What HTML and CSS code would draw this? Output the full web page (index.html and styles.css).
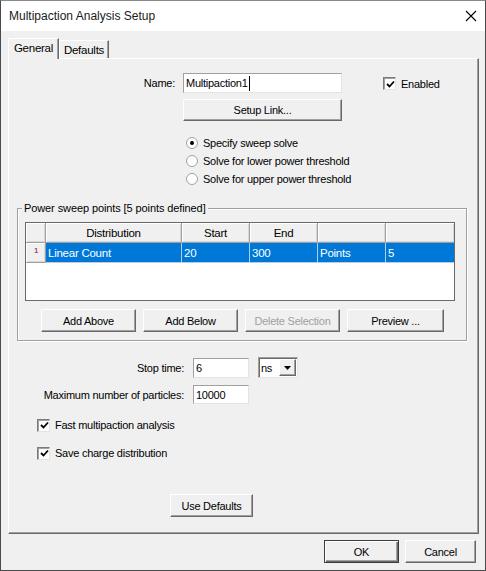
FILE: index.html
```html
<!DOCTYPE html>
<html>
<head>
<meta charset="utf-8">
<title>Multipaction Analysis Setup</title>
<link rel="stylesheet" href="styles.css">
</head>
<body>
<div class="window">
  <div class="titlebar">
    <span class="title">Multipaction Analysis Setup</span>
    <svg class="close" width="12" height="12" viewBox="0 0 12 12"><path d="M1 1L11 11M11 1L1 11" stroke="#000" stroke-width="1.1" fill="none"/></svg>
  </div>
  <div class="client">
    <div class="tabs">
      <div class="tab active">General</div>
      <div class="tab">Defaults</div>
    </div>
    <div class="panel">
      <div class="name-row">
        <span class="name-lbl">Name:</span>
        <div class="textbox name-box">Multipaction1<span class="caret"></span></div>
        <div class="check enabled">
          <span class="cbox"><svg width="9" height="9" viewBox="0 0 9 9"><path d="M1 4L3.5 6.5L8 1.5" stroke="#000" stroke-width="1.8" fill="none"/></svg></span>
          <span>Enabled</span>
        </div>
      </div>
      <div class="btn setup">Setup Link...</div>
      <div class="radios">
        <div class="radio"><svg class="rc" width="12" height="12" viewBox="0 0 12 12"><circle cx="6" cy="6" r="5.5" fill="#fff" stroke="#a0a0a0"/><circle cx="6" cy="6" r="2" fill="#000"/></svg><span>Specify sweep solve</span></div>
        <div class="radio"><svg class="rc" width="12" height="12" viewBox="0 0 12 12"><circle cx="6" cy="6" r="5.5" fill="#fff" stroke="#a0a0a0"/></svg><span>Solve for lower power threshold</span></div>
        <div class="radio"><svg class="rc" width="12" height="12" viewBox="0 0 12 12"><circle cx="6" cy="6" r="5.5" fill="#fff" stroke="#a0a0a0"/></svg><span>Solve for upper power threshold</span></div>
      </div>
      <div class="group">
        <div class="legend">Power sweep points [5 points defined]</div>
        <div class="grid">
          <div class="hcell corner"></div>
          <div class="hcell">Distribution</div>
          <div class="hcell">Start</div>
          <div class="hcell">End</div>
          <div class="hcell"></div>
          <div class="hcell last"></div>
          <div class="hcell rowhead"><span class="rownum">1</span></div>
          <div class="dcell">Linear Count</div>
          <div class="dcell">20</div>
          <div class="dcell">300</div>
          <div class="dcell">Points</div>
          <div class="dcell last">5</div>
          <div class="empty"></div>
        </div>
        <div class="btnrow">
          <div class="btn gbtn">Add Above</div>
          <div class="btn gbtn">Add Below</div>
          <div class="btn gbtn disabled">Delete Selection</div>
          <div class="btn gbtn preview">Preview ...</div>
        </div>
      </div>
      <div class="field-row stop">
        <span class="field-lbl">Stop time:</span>
        <div class="textbox short">6</div>
        <div class="combo">
          <span class="combo-val">ns</span>
          <span class="combo-btn"><svg width="7" height="4" viewBox="0 0 7 4"><path d="M0 0H7L3.5 4Z" fill="#000"/></svg></span>
        </div>
      </div>
      <div class="field-row maxp">
        <span class="field-lbl">Maximum number of particles:</span>
        <div class="textbox short thin">10000</div>
      </div>
      <div class="check opt first">
        <span class="cbox"><svg width="9" height="9" viewBox="0 0 9 9"><path d="M1 4L3.5 6.5L8 1.5" stroke="#000" stroke-width="1.8" fill="none"/></svg></span>
        <span>Fast multipaction analysis</span>
      </div>
      <div class="check opt second">
        <span class="cbox"><svg width="9" height="9" viewBox="0 0 9 9"><path d="M1 4L3.5 6.5L8 1.5" stroke="#000" stroke-width="1.8" fill="none"/></svg></span>
        <span>Save charge distribution</span>
      </div>
      <div class="btn usedef">Use Defaults</div>
    </div>
    <div class="footer">
      <div class="btn ok">OK</div>
      <div class="btn cancel">Cancel</div>
    </div>
  </div>
</div>
</body>
</html>
```
FILE: styles.css
```css
html, body {
  margin: 0;
  padding: 0;
  background: #f0f0f0;
}
body {
  font-family: "Liberation Sans", Arial, sans-serif;
  font-size: 11px;
  letter-spacing: -0.25px;
  color: #000;
}
.window {
  width: 486px;
  height: 571px;
  box-sizing: border-box;
  border: 1px solid #4a4a4a;
  border-top-color: #8a8a8a;
  background: #f0f0f0;
  display: flex;
  flex-direction: column;
}
.titlebar {
  height: 30px;
  flex: none;
  background: #fff;
  display: flex;
  align-items: center;
  justify-content: space-between;
  padding: 0 8px 0 8px;
}
.title {
  font-size: 12px;
  letter-spacing: 0;
  color: #1a1a1a;
}
.close {
  display: block;
}
.client {
  padding: 7px 0 0 7px;
}
.tabs {
  display: flex;
  align-items: flex-end;
  height: 20px;
}
.tab {
  box-sizing: border-box;
  width: 50px;
  height: 18px;
  border-top: 1px solid #fff;
  border-left: 1px solid #fff;
  border-right: 1px solid #696969;
  box-shadow: inset -1px 0 #a0a0a0;
  font-size: 11.5px;
  display: flex;
  align-items: center;
  justify-content: center;
  background: #f0f0f0;
}
.tab.active {
  width: 51px;
  height: 21px;
  margin-bottom: -1px;
  position: relative;
  z-index: 1;
  padding-bottom: 2px;
}
.panel {
  box-sizing: border-box;
  width: 471px;
  height: 476px;
  border-top: 1px solid #fff;
  border-left: 1px solid #fff;
  border-right: 1px solid #696969;
  border-bottom: 1px solid #696969;
  box-shadow: inset -1px -1px #a0a0a0;
  display: flex;
  flex-direction: column;
  align-items: flex-start;
}
.name-row {
  margin-top: 14px;
  display: flex;
  align-items: center;
  height: 20px;
}
.name-lbl {
  width: 166px;
  text-align: right;
  margin-right: 8px;
}
.textbox {
  box-sizing: border-box;
  background: #fff;
  border: 1px solid;
  border-color: #a0a0a0 #e3e3e3 #e3e3e3 #a0a0a0;
  height: 20px;
  padding: 0 2px;
  display: flex;
  align-items: center;
}
.name-box {
  width: 159px;
}
.caret {
  display: inline-block;
  width: 1px;
  height: 15px;
  background: #000;
  margin-left: 1px;
}
.check {
  display: flex;
  align-items: center;
}
.cbox {
  box-sizing: border-box;
  width: 13px;
  height: 13px;
  background: #fff;
  border: 1px solid;
  border-color: #7a7a7a #e3e3e3 #e3e3e3 #7a7a7a;
  box-shadow: inset 1px 1px #a0a0a0;
  display: flex;
  align-items: center;
  justify-content: center;
  margin-right: 5px;
  flex: none;
}
.cbox svg {
  display: block;
  margin: 1px 0 0 1px;
}
.enabled {
  margin-left: 41px;
  margin-top: 1px;
}
.btn {
  box-sizing: border-box;
  background: #f0f0f0;
  border: 1px solid;
  border-color: #fff #696969 #696969 #fff;
  box-shadow: inset -1px -1px #a0a0a0;
  display: flex;
  align-items: center;
  justify-content: center;
}
.setup {
  margin: 6px 0 0 174px;
  width: 159px;
  height: 22px;
}
.radios {
  margin: 13px 0 0 177px;
  display: flex;
  flex-direction: column;
}
.radio {
  height: 18px;
  display: flex;
  align-items: center;
}
.rc {
  display: block;
  margin-right: 5px;
}
.group {
  box-sizing: border-box;
  margin: 20px 0 0 8px;
  width: 450px;
  border: 1px solid #a0a0a0;
  box-shadow: inset 1px 1px #fff, 1px 1px #fff;
  padding: 0 0 8px 0;
}
.legend {
  display: table;
  margin: -7px 0 0 4px;
  padding: 0 2px;
  background: #f0f0f0;
  line-height: 13px;
  letter-spacing: -0.1px;
}
.grid {
  box-sizing: border-box;
  margin: 7px 0 0 7px;
  width: 430px;
  height: 79px;
  border: 1px solid #696969;
  background: #fff;
  display: grid;
  grid-template-columns: 20px 136px 68px 68px 68px 68px;
  grid-template-rows: 20px 20px 1fr;
  font-size: 11.5px;
}
.hcell {
  box-sizing: border-box;
  background: #f0f0f0;
  border-right: 1px solid #a0a0a0;
  border-bottom: 1px solid #a0a0a0;
  box-shadow: inset 1px 1px #fff, inset -1px -1px #d8d8d8;
  display: flex;
  align-items: center;
  justify-content: center;
}
.hcell.last {
  border-right: 0;
}
.rowhead {
  justify-content: flex-start;
  align-items: flex-start;
}
.rownum {
  font-size: 8px;
  letter-spacing: 0;
  color: #7a1010;
  margin: 3px 0 0 8px;
}
.dcell {
  box-sizing: border-box;
  background: #0078d7;
  color: #fff;
  border-right: 1px solid #b7cde3;
  border-bottom: 1px solid #b7cde3;
  display: flex;
  align-items: center;
  padding-left: 2px;
}
.dcell.last {
  border-right: 0;
}
.empty {
  grid-column: 1 / -1;
}
.btnrow {
  margin: 8px 0 0 23px;
  display: flex;
  gap: 7px;
}
.gbtn {
  width: 95px;
  height: 23px;
}
.gbtn.preview {
  width: 97px;
}
.gbtn.disabled {
  color: #a0a0a0;
}
.field-row {
  display: flex;
  align-items: center;
}
.field-row.stop {
  margin-top: 16px;
  height: 21px;
}
.field-row.maxp {
  margin-top: 7px;
  height: 19px;
}
.field-lbl {
  width: 175px;
  text-align: right;
  margin-right: 9px;
}
.short {
  width: 56px;
}
.thin {
  height: 19px;
}
.combo {
  box-sizing: border-box;
  margin-left: 9px;
  width: 40px;
  height: 21px;
  background: #fff;
  border: 1px solid;
  border-color: #a0a0a0 #e3e3e3 #e3e3e3 #a0a0a0;
  box-shadow: inset 1px 1px #696969;
  display: flex;
  align-items: stretch;
}
.combo-val {
  flex: 1;
  display: flex;
  align-items: center;
  padding-left: 2px;
}
.combo-btn {
  box-sizing: border-box;
  width: 17px;
  background: #f0f0f0;
  border: 1px solid;
  border-color: #fff #696969 #696969 #fff;
  box-shadow: inset -1px -1px #a0a0a0;
  display: flex;
  align-items: center;
  justify-content: center;
  margin: 1px 1px 1px 0;
}
.combo-btn svg {
  display: block;
}
.opt {
  margin-left: 28px;
  height: 18px;
}
.opt.first {
  margin-top: 12px;
}
.opt.second {
  margin-top: 10px;
}
.usedef {
  margin: 32px 0 0 161px;
  width: 83px;
  height: 23px;
}
.footer {
  display: flex;
  justify-content: flex-end;
  gap: 6px;
  margin-top: 6px;
  padding-right: 9px;
}
.footer .btn {
  height: 23px;
}
.ok {
  width: 75px;
  border-color: #3c3c3c;
  box-shadow: inset 1px 1px #fff, inset -1px -1px #696969, inset -2px -2px #a0a0a0;
}
.cancel {
  width: 71px;
}
```
